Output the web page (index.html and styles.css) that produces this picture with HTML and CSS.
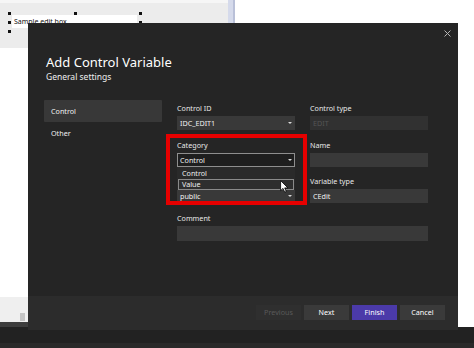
FILE: index.html
```html
<!DOCTYPE html>
<html>
<head>
<meta charset="utf-8">
<title>Add Control Variable</title>
<link rel="stylesheet" href="styles.css">
</head>
<body>
<div class="workspace">
  <div class="designer">
    <div class="canvas">
      <div class="edited">
        <div class="sample">Sample edit box</div>
        <span class="handle h-tl"></span>
        <span class="handle h-tm"></span>
        <span class="handle h-tr"></span>
        <span class="handle h-ml"></span>
        <span class="handle h-mr"></span>
        <span class="handle h-bl"></span>
      </div>
      <div class="canvas-rest"></div>
      <div class="hscroll"><span class="thumb"></span></div>
      <div class="canvas-edge"></div>
    </div>
    <div class="vline"></div>
    <div class="blank"></div>
  </div>
  <div class="statusbar"></div>
</div>

<div class="dialog">
  <svg class="close" width="7" height="7" viewBox="0 0 7 7"><path d="M0.5 0.5L6.5 6.5M6.5 0.5L0.5 6.5" stroke="#b5b5b5" stroke-width="1"/></svg>
  <header class="head">
    <h1 class="title">Add Control Variable</h1>
    <p class="subtitle">General settings</p>
  </header>
  <div class="body">
    <nav class="nav">
      <div class="nav-item active">Control</div>
      <div class="nav-item">Other</div>
    </nav>
    <div class="form">
      <div class="field">
        <div class="label">Control ID</div>
        <div class="input select">IDC_EDIT1<span class="arrow"></span></div>
      </div>
      <div class="field">
        <div class="label">Control type</div>
        <div class="input disabled">EDIT</div>
      </div>
      <div class="field">
        <div class="label">Category</div>
        <div class="input select open">Control<span class="arrow"></span>
          <div class="list">
            <div class="option">Control</div>
            <div class="option focused">Value</div>
          </div>
        </div>
      </div>
      <div class="field">
        <div class="label">Name</div>
        <div class="input"></div>
      </div>
      <div class="field">
        <div class="label">&nbsp;</div>
        <div class="input select">public<span class="arrow"></span></div>
      </div>
      <div class="field">
        <div class="label">Variable type</div>
        <div class="input">CEdit</div>
      </div>
      <div class="field wide">
        <div class="label">Comment</div>
        <div class="input tall"></div>
      </div>
    </div>
  </div>
  <footer class="foot">
    <button class="btn disabled">Previous</button>
    <button class="btn">Next</button>
    <button class="btn primary">Finish</button>
    <button class="btn">Cancel</button>
  </footer>
  <div class="highlight"></div>
  <svg class="cursor" width="9" height="13" viewBox="0 0 9 13"><path d="M0.6 0.6L0.6 10.6L3 8.4L4.7 12.2L6.3 11.5L4.7 7.9L7.9 7.9Z" fill="#fff" stroke="#000" stroke-width="0.8" stroke-linejoin="round"/></svg>
</div>
</body>
</html>
```

FILE: styles.css
```css
* { box-sizing: border-box; margin: 0; padding: 0; }
html, body { width: 474px; height: 348px; overflow: hidden; }
body {
  position: relative;
  background: #fff;
  font-family: "Noto Sans", "DejaVu Sans", sans-serif;
}

/* background editor */
.workspace { display: flex; flex-direction: column; height: 348px; }
.designer { flex: 1; display: flex; min-height: 0; }
.canvas { width: 228px; display: flex; flex-direction: column; }
.edited {
  position: relative;
  height: 48px;
  background: #ececec;
  border-top: 3px solid #f6f6f6;
}
.sample {
  position: absolute;
  left: 12px;
  top: 12px;
  width: 125px;
  height: 13px;
  background: #fff;
  color: #111;
  font-size: 7px;
  line-height: 13px;
  padding-left: 2px;
}
.handle { position: absolute; width: 3px; height: 3px; background: #111; }
.h-tl { left: 8px; top: 9px; }
.h-tm { left: 74px; top: 9px; }
.h-tr { left: 139px; top: 9px; }
.h-ml { left: 8px; top: 18px; }
.h-mr { left: 139px; top: 18px; }
.h-bl { left: 8px; top: 27px; }
.canvas-rest { flex: 1; background: #fff; }
.hscroll { height: 25px; background: #efefef; position: relative; }
.thumb { position: absolute; left: 20px; top: 16px; width: 5px; height: 8px; background: #c4c4c4; }
.canvas-edge { height: 5px; background: #3d3d3d; }
.vline { width: 7px; background: #d5daeb; border-right: 2px solid #b9c0d8; }
.blank { flex: 1; background: #fff; }
.statusbar { height: 21px; background: #222; border-bottom: 5px solid #2a2a2a; }

/* dialog */
.dialog {
  position: absolute;
  left: 28px;
  top: 23px;
  width: 430px;
  height: 307px;
  background: #252525;
  color: #fff;
  display: flex;
  flex-direction: column;
}
.close { position: absolute; left: 416px; top: 7px; }
.head { height: 77px; padding: 32px 0 0 18px; }
.title { font-size: 13px; line-height: 15px; font-weight: 400; color: #fff; }
.subtitle { font-size: 8.5px; line-height: 11px; margin-top: 1px; color: #f0f0f0; }

.body { flex: 1; display: flex; gap: 15px; padding-left: 16px; }
.nav { width: 118px; display: flex; flex-direction: column; }
.nav-item {
  height: 22px;
  line-height: 22px;
  padding-left: 7px;
  font-size: 7.2px;
  color: #f2f2f2;
  border-radius: 1px;
}
.nav-item.active { background: #383838; }

.form {
  width: 251px;
  padding-top: 3px;
  display: grid;
  grid-template-columns: 118px 118px;
  column-gap: 15px;
  row-gap: 9.5px;
  align-content: start;
}
.field.wide { grid-column: 1 / 3; }
.label {
  font-size: 7.2px;
  line-height: 11px;
  margin-bottom: 2px;
  color: #e8e8e8;
}
.input {
  position: relative;
  height: 14px;
  line-height: 14px;
  background: #393939;
  font-size: 7.2px;
  color: #f2f2f2;
  padding-left: 3px;
}
.input.tall { height: 15px; }
.input.disabled { background: #313131; color: #555; }
.arrow {
  position: absolute;
  right: 3px;
  top: 6px;
  width: 0;
  height: 0;
  border-left: 2px solid transparent;
  border-right: 2px solid transparent;
  border-top: 2px solid #d8d8d8;
}
.input.open {
  background: #1e1e1e;
  border: 1px solid #8e8e8e;
  line-height: 12px;
  padding-left: 2px;
  z-index: 2;
}
.input.open .arrow { top: 5px; right: 2px; }
.list {
  position: absolute;
  left: -1px;
  right: -1px;
  top: 13px;
  height: 23px;
  background: #2a2a2a;
  padding: 1px 1px 0;
}
.option {
  height: 11px;
  line-height: 11px;
  padding-left: 4px;
  font-size: 7.2px;
  color: #eee;
}
.option.focused { border: 1px solid #8a8a8a; line-height: 9px; padding-left: 3px; background: #2e2e2e; }

.foot {
  height: 34px;
  background: #2c2c2c;
  display: flex;
  justify-content: flex-end;
  align-items: flex-start;
  gap: 3px;
  padding: 9px 13px 0 0;
}
.btn {
  width: 45px;
  height: 15px;
  border: none;
  background: #3a3a3a;
  color: #fff;
  font-family: "Noto Sans", "DejaVu Sans", sans-serif;
  font-size: 7.2px;
  line-height: 15px;
}
.btn.disabled { background: #2f2f2f; color: #5a5a5a; }
.btn.primary { background: #4b3aa9; }

.highlight {
  position: absolute;
  left: 138px;
  top: 111px;
  width: 141px;
  height: 71px;
  border: 4px solid #e60000;
  z-index: 3;
}
.cursor { position: absolute; left: 252px; top: 157px; z-index: 4; }
```
